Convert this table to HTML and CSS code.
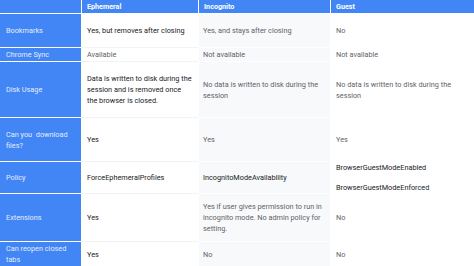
FILE: index.html
```html
<!DOCTYPE html>
<html lang="en">
<head>
    <meta charset="UTF-8">
    <title>Profile Modes Comparison</title>
    <meta name="viewport" content="width=device-width, initial-scale=1.0">
    <link rel="stylesheet" href="styles.css">
</head>
<body>
    <div class="compare">
        <!-- header row -->
        <div class="head"></div>
        <div class="head">Ephemeral</div>
        <div class="head">Incognito</div>
        <div class="head">Guest</div>

        <div class="label">Bookmarks</div>
        <div class="cell eph dark">Yes, but removes after closing</div>
        <div class="cell inc">Yes, and stays after closing</div>
        <div class="cell">No</div>

        <div class="label">Chrome Sync</div>
        <div class="cell eph">Available</div>
        <div class="cell inc">Not available</div>
        <div class="cell">Not available</div>

        <div class="label">Disk Usage</div>
        <div class="cell eph dark">Data is written to disk during the session and is removed once the browser is closed.</div>
        <div class="cell inc">No data is written to disk during the session</div>
        <div class="cell">No data is written to disk during the session</div>

        <div class="label">Can you&nbsp; download files?</div>
        <div class="cell eph dark">Yes</div>
        <div class="cell inc">Yes</div>
        <div class="cell">Yes</div>

        <div class="label">Policy</div>
        <div class="cell eph dark">ForceEphemeralProfiles</div>
        <div class="cell inc dark">IncognitoModeAvailability</div>
        <div class="cell dark pair">
            <span>BrowserGuestModeEnabled</span>
            <span>BrowserGuestModeEnforced</span>
        </div>

        <div class="label">Extensions</div>
        <div class="cell eph dark">Yes</div>
        <div class="cell inc">Yes if user gives permission to run in incognito mode. No admin policy for setting.</div>
        <div class="cell">No</div>

        <div class="label">Can reopen closed tabs</div>
        <div class="cell eph dark">Yes</div>
        <div class="cell inc">No</div>
        <div class="cell">No</div>
    </div>
</body>
</html>
```

FILE: styles.css
```css
body {
    margin: 0;
    background: #fff;
    font-family: Roboto, "Liberation Sans", sans-serif;
}
.compare {
    display: grid;
    grid-template-columns: 81px 116px 131px 1fr;
    grid-template-rows: 13px 33px 13px 55px 43px 31px 47px 24px;
    gap: 1px;
    background: #fff;
    height: 266px;
    overflow: hidden;
}
.head {
    background: #4285f4;
    color: #fff;
    font-size: 7.2px;
    font-weight: 700;
    padding-left: 5px;
    display: flex;
    align-items: center;
}
.label {
    background: #4285f4;
    color: #e3ecfd;
    font-size: 7.3px;
    line-height: 11px;
    padding: 0 6px;
    display: flex;
    align-items: center;
}
.cell {
    background: #fff;
    color: #5f6368;
    font-size: 7.3px;
    line-height: 11px;
    padding: 0 5px;
    display: flex;
    align-items: center;
}
.eph {
    box-shadow: 0 1px 0 #f1f3f4;
}
.inc {
    background: #f8f9fa;
    padding-left: 4px;
}
.dark {
    color: #202124;
}
.pair {
    flex-direction: column;
    align-items: flex-start;
    justify-content: center;
    gap: 9px;
}
```
